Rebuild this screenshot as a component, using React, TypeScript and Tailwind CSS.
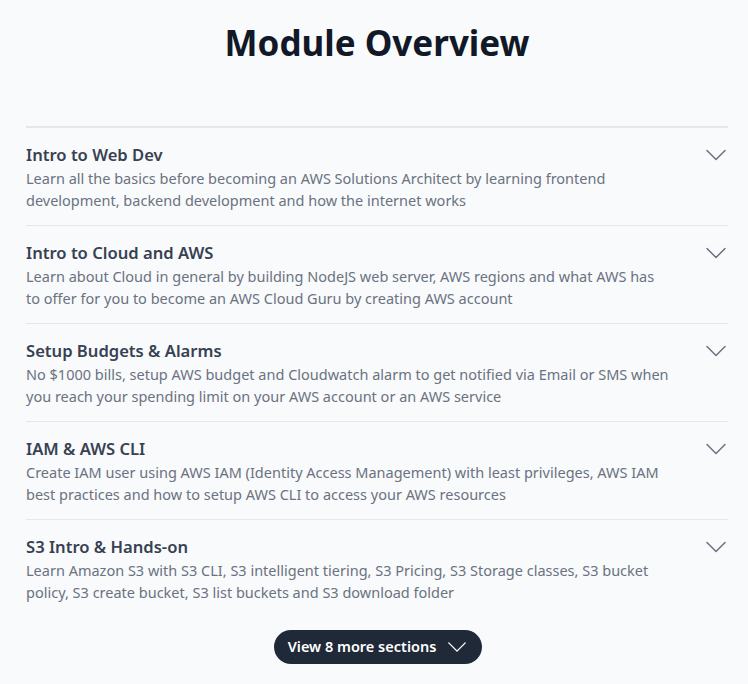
const modules = [
  {
    title: "Intro to Web Dev",
    description:
      "Learn all the basics before becoming an AWS Solutions Architect by learning frontend development, backend development and how the internet works",
  },
  {
    title: "Intro to Cloud and AWS",
    description:
      "Learn about Cloud in general by building NodeJS web server, AWS regions and what AWS has to offer for you to become an AWS Cloud Guru by creating AWS account",
  },
  {
    title: "Setup Budgets & Alarms",
    description:
      "No $1000 bills, setup AWS budget and Cloudwatch alarm to get notified via Email or SMS when you reach your spending limit on your AWS account or an AWS service",
  },
  {
    title: "IAM & AWS CLI",
    description:
      "Create IAM user using AWS IAM (Identity Access Management) with least privileges, AWS IAM best practices and how to setup AWS CLI to access your AWS resources",
  },
  {
    title: "S3 Intro & Hands-on",
    description:
      "Learn Amazon S3 with S3 CLI, S3 intelligent tiering, S3 Pricing, S3 Storage classes, S3 bucket policy, S3 create bucket, S3 list buckets and S3 download folder",
  },
];

function Chevron({ className }: { className?: string }) {
  return (
    <svg className={className} fill="none" stroke="currentColor" viewBox="0 0 24 24">
      <path strokeLinecap="round" strokeLinejoin="round" strokeWidth={1.5} d="M3 7.5l9 9 9-9" />
    </svg>
  );
}

export default function App() {
  return (
    <div className="min-h-screen bg-[#f8fafc] font-['Noto_Sans',sans-serif]">
      <div className="pl-[26px] pr-[20px] pt-[19px]">
        <h1 className="text-center text-[35px] leading-[48px] font-bold text-[#111827]">Module Overview</h1>
        <div className="mt-[59px] border-t-2 border-[#e5e7eb]">
          {modules.map((m, i) => (
            <div
              key={m.title}
              className={`flex justify-between pt-[15px] pb-[14px] ${i < modules.length - 1 ? "border-b border-[#e5e7eb]" : ""}`}
            >
              <div className="w-[645px]">
                <h3 className="text-[16.6px] leading-[24px] font-semibold text-[#374151]">{m.title}</h3>
                <p className="text-[14.5px] leading-[22px] text-[#6b7280]">{m.description}</p>
              </div>
              <Chevron className="w-[24px] h-[24px] text-[#6b7280]" />
            </div>
          ))}
        </div>
        <div className="flex justify-center mt-[13px] pl-[2px]">
          <button className="flex items-center gap-[10px] h-[34px] pl-[14px] pr-[14px] rounded-full bg-[#1f2937] text-white text-[14.5px] font-semibold">
            View 8 more sections
            <Chevron className="w-[22px] h-[22px]" />
          </button>
        </div>
      </div>
    </div>
  );
}
